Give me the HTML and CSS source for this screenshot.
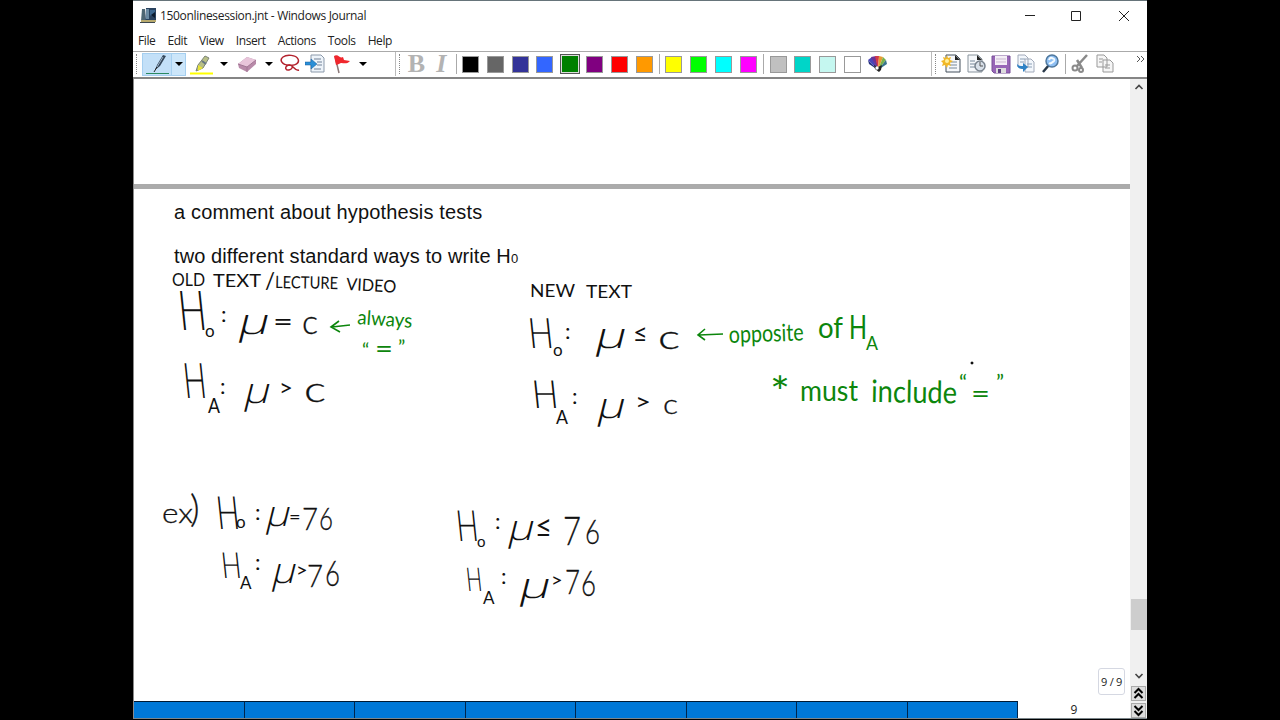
FILE: index.html
```html
<!DOCTYPE html>
<html lang="en">
<head>
  <meta charset="utf-8">
  <title>150onlinesession.jnt - Windows Journal</title>
  <link rel="stylesheet" href="styles.css">
</head>
<body>

<div class="window">
  <div class="titlebar">
    <svg class="app-icon" width="18" height="17" viewBox="0 0 18 17">
      <path d="M6 0h10v13H5z" fill="#29425f"/><path d="M6 1h3v10H6z" fill="#6b8aa2"/><path d="M10 2h5v3l-4 3-1-1z" fill="#3c678f"/>
      <path d="M2 1h3v12H1z" fill="#4e6673"/><path d="M1 12h15v2H1z" fill="#b7a96d"/><path d="M0 14h15v1H0z" fill="#3b4750"/><path d="M11 7l4-3v6z" fill="#0b1b2d"/>
    </svg>
    <span class="title">150onlinesession.jnt - Windows Journal</span>
    <div class="controls">
      <svg width="110" height="14" viewBox="0 0 110 14" fill="none" stroke="#222">
        <path d="M1 6.500h10M47.500 2.500h9v9h-9zM95 2l10 10M105 2l-10 10"/>
      </svg>
    </div>
  </div>

  <div class="menubar">
    <span>File</span><span>Edit</span><span>View</span><span>Insert</span><span>Actions</span><span>Tools</span><span>Help</span>
  </div>

  <div class="toolbars">
    <div class="toolbar tools">
      <i class="grip"></i>
      <div class="pen">
        <svg width="28" height="22" viewBox="0 0 28 22"><path d="M3 20.500h23" stroke="#2a8a62"/><path d="M12 17l2-5L20 2l3 1-6 10z" fill="#34465a"/><path d="M20 4l-6 10" stroke="#9db3c8"/><path d="M11 19l3-5" stroke="#222"/></svg>
        <i class="arrow"></i>
      </div>
      <div class="slot marker">
        <svg width="24" height="22" viewBox="0 0 24 22"><path d="M0 20.500h23" stroke="#ff0" stroke-width="2"/><path d="M6 18l2-6 7-9 4 2-6 10z" fill="#b8bf86" stroke="#7b8476"/><path d="M8 12l5 3-5 3z" fill="#e8e337"/><path d="M12 8l4 3" stroke="#667784" stroke-width="2"/></svg>
      </div>
      <div class="drop"><i class="arrow"></i></div>
      <div class="slot eraser">
        <svg width="20" height="18" viewBox="0 0 20 18"><path d="M1 9L10 2l9 3v4l-9 8-8-4z" fill="#b88aa9"/><path d="M1 9L10 2l9 3-9 7z" fill="#e8c5da"/><path d="M10 12v5M1 9l9 3 9-7" fill="none" stroke="#a27795"/></svg>
      </div>
      <div class="drop"><i class="arrow"></i></div>
      <div class="slot">
        <svg width="20" height="20" viewBox="0 0 20 20" fill="none" stroke="#b3222d" stroke-width="1.500"><path d="M9 11C2 11-1 6 3 3s13-2 15 2-3 7-8 6c-3 0-5 2-4 4s5 1 6-1-1-3-3-3M12 12c2 2 4 5 7 4"/></svg>
      </div>
      <div class="slot">
        <svg width="20" height="20" viewBox="0 0 20 20"><path d="M6 1h10l3 3v14H6z" fill="#eef4fa" stroke="#8b99aa"/><path d="M9 5h7M12 8h5M12 11h5M9 15h7" stroke="#718096"/><path d="M0 8h6V5l6 5-6 5v-4H0z" fill="#2b8fd6" stroke="#175b98" stroke-width=".5"/></svg>
      </div>
      <div class="slot flag">
        <svg width="18" height="20" viewBox="0 0 18 20"><path d="M2 2l4 17" stroke="#8b7878" stroke-width="1.500"/><path d="M1 2c4-3 6 3 9 1l1 3 6 1c-5 5-8 0-11 3L3 11z" fill="#f0272d"/></svg>
      </div>
      <div class="drop"><i class="arrow"></i></div>
    </div>

    <div class="toolbar format">
      <i class="grip"></i>
      <div class="slot letter">B</div>
      <div class="slot letter italic">I</div>
      <i class="sep"></i>
      <div class="slot"><i class="swatch black"></i></div>
      <div class="slot"><i class="swatch gray"></i></div>
      <div class="slot"><i class="swatch navy"></i></div>
      <div class="slot"><i class="swatch blue"></i></div>
      <div class="slot"><i class="swatch green selected"></i></div>
      <div class="slot"><i class="swatch purple"></i></div>
      <div class="slot"><i class="swatch red"></i></div>
      <div class="slot"><i class="swatch orange"></i></div>
      <i class="sep"></i>
      <div class="slot"><i class="swatch yellow"></i></div>
      <div class="slot"><i class="swatch lime"></i></div>
      <div class="slot"><i class="swatch cyan"></i></div>
      <div class="slot"><i class="swatch magenta"></i></div>
      <i class="sep"></i>
      <div class="slot"><i class="swatch silver"></i></div>
      <div class="slot"><i class="swatch teal"></i></div>
      <div class="slot"><i class="swatch mint"></i></div>
      <div class="slot"><i class="swatch white"></i></div>
      <div class="slot">
        <svg width="20" height="18" viewBox="0 0 20 18"><path d="M10 15L1 9 0 5z" fill="#26327e"/><path d="M10 15L0 5l4-3z" fill="#4a45b8"/><path d="M10 15L3 2l5-1z" fill="#6d3295"/><path d="M10 15L7 1h4z" fill="#d33b48"/><path d="M10 15l1-14 4 1z" fill="#e89b32"/><path d="M10 15l5-13 3 3z" fill="#79b14b"/><path d="M10 15l8-10 1 4z" fill="#38738c"/><path d="M6 10l4 2 4-2-1 5-2 2-4-3z" fill="#222"/><circle cx="9" cy="13" r="1.700" fill="#fff"/></svg>
      </div>
    </div>

    <div class="toolbar standard">
      <i class="grip"></i>
      <div class="slot">
        <svg width="20" height="20" viewBox="0 0 20 20"><path d="M5 1h10l4 4v13H5z" fill="#f6f8fb" stroke="#44505d"/><path d="M14 1l5 5h-5z" fill="#222"/><path d="M10 8h6M9 11h7M8 14h8" fill="none" stroke="#77889a"/><path d="M6 1l1 3 3-1-1 3 3 1-3 2 1 3-3-1-1 3-2-3-3 1 1-3-2-2 3-1-1-3 3 1z" fill="#f1b827"/><circle cx="6" cy="7" r="2" fill="#fff09c"/></svg>
      </div>
      <div class="slot">
        <svg width="20" height="20" viewBox="0 0 20 20"><path d="M2 1h10l4 4v13H2z" fill="#f6f8fb" stroke="#88939c"/><path d="M11 1l5 5h-5z" fill="#222"/><path d="M4 7h5M4 10h5M4 13h5" stroke="#77889a"/><circle cx="14" cy="12" r="5" fill="#d8e0e9" stroke="#79838e" stroke-width="1.500"/><path d="M14 8v4h3" fill="none" stroke="#555"/></svg>
      </div>
      <div class="slot">
        <svg width="20" height="19" viewBox="0 0 20 19"><path d="M1 1h18v17H3l-2-2z" fill="#9866b7" stroke="#795198"/><path d="M4 1h12v9H4z" fill="#f4eef6"/><path d="M5 4h10M5 7h10" stroke="#c9b7d0"/><path d="M5 13h10v5H5z" fill="#ddd"/><path d="M7 14h3v4H7z" fill="#5c3f80"/></svg>
      </div>
      <div class="slot">
        <svg width="20" height="20" viewBox="0 0 20 20"><path d="M2 1h7l3 3v9H2zM9 5h6l3 3v10H9z" fill="#f3f7fc" stroke="#a2aaba"/><path d="M4 5h5M4 8h4M11 10h5M11 13h5" stroke="#8da0b6"/><path d="M1 10c0 4 3 5 6 5v3l5-5-5-4v3c-3 0-4 0-6-2z" fill="#2f82c5"/></svg>
      </div>
      <div class="slot">
        <svg width="20" height="20" viewBox="0 0 20 20"><path d="M8 11l-6 7" stroke="#293949" stroke-width="2.500"/><circle cx="11" cy="7" r="6" fill="#8fc0f4" stroke="#50789d" stroke-width="1.500"/><path d="M8 6c2-5 4 0 6-1M8 9c3 2 4-3 6-2" stroke="#f5fbff" fill="none" stroke-width="2"/></svg>
      </div>
      <i class="sep"></i>
      <div class="slot">
        <svg width="18" height="20" viewBox="0 0 18 20" fill="none" stroke="#8a8a8a" stroke-width="2"><path d="M16 1L6 12M6 6l5 8" stroke-width="2.500"/><circle cx="4" cy="14" r="2.500"/><circle cx="10" cy="16" r="2"/></svg>
      </div>
      <div class="slot">
        <svg width="20" height="20" viewBox="0 0 20 20" fill="#f6f6f6" stroke="#999"><path d="M2 1h7l3 3v9H2zM8 6h7l3 3v9H8z"/><path d="M4 5h4M4 8h3M10 11h5M10 14h5"/></svg>
      </div>
      <svg class="more" width="10" height="8" viewBox="0 0 10 8" fill="none" stroke="#555"><path d="M1 1l3 3-3 3M5 1l3 3-3 3"/></svg>
    </div>
  </div>

  <div class="workspace">
    <div class="document">
      <div class="sheet">
        <div class="previous-page"></div>
        <p class="typed">a comment about hypothesis tests</p>
        <p class="typed second">two different standard ways to write H<small>0</small></p>

        <!-- handwritten notes, in window coordinates -->
        <svg class="ink" width="996" height="622" viewBox="134 79 996 622">
          <g class="caps">
            <text x="172" y="286" textLength="33" lengthAdjust="spacingAndGlyphs">OLD</text>
            <text x="213" y="287" textLength="48" lengthAdjust="spacingAndGlyphs">TEXT</text>
            <text x="265" y="289" textLength="10" lengthAdjust="spacingAndGlyphs" font-size="23">/</text>
            <text x="275" y="288" textLength="63" lengthAdjust="spacingAndGlyphs" transform="rotate(1 275 288)">LECTURE</text>
            <text x="346" y="290" textLength="50" lengthAdjust="spacingAndGlyphs" transform="rotate(3 346 290)">VIDEO</text>
            <text x="530" y="297" textLength="45" lengthAdjust="spacingAndGlyphs">NEW</text>
            <text x="586" y="298" textLength="46" lengthAdjust="spacingAndGlyphs">TEXT</text>
          </g>

          <g class="tall">
            <text x="178" y="330" font-size="55" textLength="28" lengthAdjust="spacingAndGlyphs">H</text>
            <text x="183" y="398" font-size="49" textLength="23" lengthAdjust="spacingAndGlyphs">H</text>
            <text x="528" y="348" font-size="42" textLength="25" lengthAdjust="spacingAndGlyphs">H</text>
            <text x="532" y="408" font-size="39" textLength="26" lengthAdjust="spacingAndGlyphs">H</text>
            <text x="216" y="529" font-size="46" textLength="23" lengthAdjust="spacingAndGlyphs">H</text>
            <text x="221" y="578" font-size="36" textLength="20" lengthAdjust="spacingAndGlyphs">H</text>
            <text x="456" y="541" font-size="43" textLength="22" lengthAdjust="spacingAndGlyphs">H</text>
            <text x="466" y="591" font-size="33" textLength="16" lengthAdjust="spacingAndGlyphs">H</text>
          </g>

          <g class="sub">
            <text x="205" y="337">o</text><text x="208" y="413" font-size="22" textLength="12" lengthAdjust="spacingAndGlyphs">A</text>
            <text x="553" y="356">o</text><text x="556" y="424" font-size="20" textLength="12" lengthAdjust="spacingAndGlyphs">A</text>
            <text x="236" y="528">o</text><text x="240" y="589">A</text>
            <text x="477" y="547" font-size="15">o</text><text x="483" y="604">A</text>
          </g>

          <g class="sign">
            <text class="colon" x="221" y="322">:</text><text class="colon" x="220" y="394">:</text>
            <text class="colon" x="565" y="339">:</text><text class="colon" x="572" y="404">:</text>
            <text class="colon" x="255" y="520">:</text><text class="colon" x="255" y="570">:</text>
            <text class="colon" x="495" y="529">:</text><text class="colon" x="501" y="584">:</text>
            <text x="273" y="331" font-size="27" textLength="20" lengthAdjust="spacingAndGlyphs">=</text>
            <text x="279" y="396">&gt;</text>
            <text x="633" y="342" font-size="25">≤</text>
            <text x="635" y="410" textLength="16" lengthAdjust="spacingAndGlyphs">&gt;</text>
            <text x="289" y="524" font-size="20">=</text><text x="296" y="577" font-size="20">&gt;</text>
            <text x="535" y="537" font-size="31" textLength="17" lengthAdjust="spacingAndGlyphs">≤</text><text x="551" y="587" font-size="20">&gt;</text>
          </g>

          <g class="mu">
            <text x="240" y="334" textLength="31" lengthAdjust="spacingAndGlyphs">μ</text>
            <text x="246" y="403" textLength="26" lengthAdjust="spacingAndGlyphs">μ</text>
            <text x="597" y="348" textLength="31" lengthAdjust="spacingAndGlyphs">μ</text>
            <text x="599" y="418" textLength="28" lengthAdjust="spacingAndGlyphs">μ</text>
            <text x="268" y="526" textLength="24" lengthAdjust="spacingAndGlyphs">μ</text>
            <text x="274" y="583" textLength="24" lengthAdjust="spacingAndGlyphs">μ</text>
            <text x="510" y="540" textLength="26" lengthAdjust="spacingAndGlyphs">μ</text>
            <text x="521" y="598" textLength="31" lengthAdjust="spacingAndGlyphs">μ</text>
          </g>

          <g class="letters">
            <text x="302" y="334" font-size="34">c</text>
            <text x="304" y="402" font-size="35" textLength="22" lengthAdjust="spacingAndGlyphs">c</text>
            <text x="658" y="349" font-size="34" textLength="22" lengthAdjust="spacingAndGlyphs">c</text>
            <text x="663" y="414" font-size="28" textLength="15" lengthAdjust="spacingAndGlyphs">c</text>
            <text x="162" y="523" font-size="27" textLength="31" lengthAdjust="spacingAndGlyphs">ex</text>
            <text x="190" y="522" font-size="37">)</text>
            <text x="302" y="530" font-size="32" textLength="16" lengthAdjust="spacingAndGlyphs">7</text><text x="319" y="530" font-size="31" textLength="14" lengthAdjust="spacingAndGlyphs">6</text>
            <text x="307" y="587" font-size="32" textLength="16" lengthAdjust="spacingAndGlyphs">7</text><text x="325" y="586" font-size="35" textLength="15" lengthAdjust="spacingAndGlyphs">6</text>
            <text x="563" y="545" font-size="39" textLength="18" lengthAdjust="spacingAndGlyphs">7</text><text x="585" y="544" font-size="33" textLength="15" lengthAdjust="spacingAndGlyphs">6</text>
            <text x="565" y="594" font-size="34" textLength="15" lengthAdjust="spacingAndGlyphs">7</text><text x="581" y="596" font-size="36" textLength="15" lengthAdjust="spacingAndGlyphs">6</text>
            <circle cx="972" cy="363" r="1.300"/>
          </g>

          <g class="green-ink">
            <path d="M350 325l-18 2m7-6l-8 6 9 5M723 334l-24 1m6-6l-7 6 7 5"/>
            <text x="357" y="324" font-size="20" textLength="55" lengthAdjust="spacingAndGlyphs" transform="rotate(4 357 324)">always</text>
            <text x="362" y="357" font-size="20">“</text>
            <text x="375" y="358" font-size="25" textLength="18" lengthAdjust="spacingAndGlyphs">=</text>
            <text x="398" y="354" font-size="20">”</text>
            <text x="729" y="343" font-size="24" textLength="75" lengthAdjust="spacingAndGlyphs" transform="rotate(-2 729 343)">opposite</text>
            <text x="818" y="338" font-size="28" textLength="25" lengthAdjust="spacingAndGlyphs">of</text>
            <text x="849" y="339" font-size="33" textLength="18" lengthAdjust="spacingAndGlyphs">H</text>
            <text x="866" y="350" font-size="20" textLength="12" lengthAdjust="spacingAndGlyphs">A</text>
            <text x="770" y="407" font-size="42" textLength="20" lengthAdjust="spacingAndGlyphs">*</text>
            <text x="800" y="401" font-size="29" textLength="58" lengthAdjust="spacingAndGlyphs">must</text>
            <text x="871" y="402" font-size="31" textLength="86" lengthAdjust="spacingAndGlyphs" transform="rotate(1 871 402)">include</text>
            <text x="959" y="390" font-size="22">“</text>
            <text x="971" y="403" font-size="27" textLength="19" lengthAdjust="spacingAndGlyphs">=</text>
            <text x="996" y="390" font-size="22">”</text>
          </g>
        </svg>
        <div class="page-badge">9 / 9</div>
      </div>

      <div class="page-strip">
        <i></i><i></i><i></i><i></i><i></i><i></i><i></i><i></i>
        <span>9</span>
      </div>
    </div>

    <div class="scrollbar">
      <svg class="up" width="16" height="16" viewBox="0 0 16 16"><path d="M4.500 10L8 6.500l3.500 3.500"/></svg>
      <div class="track"><div class="thumb"></div></div>
      <svg class="down" width="16" height="16" viewBox="0 0 16 16"><path d="M4.500 6L8 9.500 11.500 6"/></svg>
      <svg class="jump" width="15" height="15" viewBox="0 0 15 15"><path d="M3.500 7l4-4 4 4M3.500 12l4-4 4 4"/></svg>
      <svg class="jump" width="15" height="15" viewBox="0 0 15 15"><path d="M3.500 3l4 4 4-4M3.500 8l4 4 4-4"/></svg>
    </div>
  </div>
</div>

</body>
</html>
```
FILE: styles.css
```css
* {
  box-sizing: border-box;
  margin: 0;
  padding: 0;
}
body {
  height: 720px;
  overflow: hidden;
  background: #000;
  font-family: "Open Sans", "Noto Sans", sans-serif;
  color: #222;
}
svg {
  display: block;
  flex: none;
}
.window {
  display: flex;
  flex-direction: column;
  width: 1014px;
  height: 719px;
  margin-left: 133px;
  background: #fff;
  border-top: 1px solid #66747a;
  border-bottom: 1px solid #7b858a;
}
.titlebar {
  display: flex;
  align-items: center;
  height: 30px;
  padding-left: 7px;
}
.title {
  margin-left: 2px;
  font-size: 12px;
  line-height: 16px;
  letter-spacing: -0.33px;
  white-space: nowrap;
}
.controls {
  margin: 0 13px 0 auto;
}
.menubar {
  display: flex;
  height: 20px;
  padding-left: 5px;
  font-size: 12px;
  line-height: 20px;
  letter-spacing: -0.4px;
}
.menubar span {
  margin-right: 12px;
}

.toolbars {
  display: flex;
  height: 28px;
  border-top: 1px solid #aaa;
  border-bottom: 2px solid #858585;
}
.toolbar {
  display: flex;
  align-items: center;
  height: 24px;
  flex: none;
}
.tools {
  width: 263px;
  border-right: 1px solid #bbb;
}
.format {
  width: 536px;
  border-right: 1px solid #bbb;
}
.standard {
  width: 215px;
}
.grip {
  width: 1px;
  height: 20px;
  margin: 0 4px 0 3px;
  border-left: 1px dotted #888;
}
.standard .grip {
  margin-right: 3px;
}
.slot {
  display: flex;
  align-items: center;
  justify-content: center;
  width: 24.8px;
  height: 22px;
  flex: none;
}
.pen {
  display: flex;
  align-items: center;
  width: 44px;
  height: 23px;
  margin-left: 1px;
  background: linear-gradient(to right, #c3e0f8 28px, #a5cff0 28px, #a5cff0 29px, #cce6fa 29px);
  border: 1px solid #a5cff0;
}
.pen .arrow {
  margin-left: 4px;
}
.marker {
  margin-left: 4px;
}
.drop {
  display: flex;
  justify-content: center;
  width: 18px;
}
.eraser {
  margin-left: 2px;
}
.flag {
  margin-left: 2px;
}
.arrow {
  border: 4px solid transparent;
  border-top-color: #000;
  border-bottom: 0;
}
.letter {
  font: bold 26px "Liberation Serif", serif;
  color: #b3b3b3;
}
.italic {
  font-style: italic;
}
.sep {
  width: 1px;
  height: 20px;
  margin: 0 2px;
  background: #aaa;
}
.swatch {
  width: 17px;
  height: 17px;
  margin-right: 1px;
  border: 1px solid #999;
}
.selected {
  width: 20px;
  height: 20px;
  border-color: #555;
  box-shadow: inset 0 0 0 1px #ddd;
}
.black { background: #000; }
.gray { background: #666; }
.navy { background: #333399; }
.blue { background: #3366ff; }
.green { background: #008000; }
.purple { background: #800080; }
.red { background: #f00; }
.orange { background: #ff9900; }
.yellow { background: #ff0; }
.lime { background: #0f0; }
.cyan { background: #0ff; }
.magenta { background: #f0f; }
.silver { background: #c0c0c0; }
.teal { background: #00d5c8; }
.mint { background: #c5f7f0; }
.white { background: #fff; }
.more {
  align-self: flex-start;
  margin: 3px 1px 0 auto;
}

.workspace {
  display: flex;
  flex: 1;
  min-height: 0;
  border-left: 1px solid #8a8a8a;
}
.document {
  display: flex;
  flex-direction: column;
  width: 996px;
}
.sheet {
  position: relative;
  flex: 1;
}
.previous-page {
  height: 110px;
  border-bottom: 5px solid #ababab;
}
.typed {
  height: 24px;
  margin: 11px 0 0 40px;
  font: 20px/24px "Liberation Sans", sans-serif;
  letter-spacing: 0.15px;
  color: #111;
}
.second {
  margin-top: 20px;
  letter-spacing: 0.1px;
}
.typed small {
  font-size: 13px;
}

.ink {
  position: absolute;
  left: 0;
  top: 0;
  font-family: Lato, sans-serif;
  font-weight: 400;
  fill: #111;
}
.caps {
  font-size: 17px;
}
.tall {
  font-weight: 300;
}
.tall text {
  transform-box: fill-box;
  transform-origin: center;
  transform: skewX(6deg);
}
.sub {
  font-size: 17px;
}
.sign {
  font-size: 24px;
}
.colon {
  font-size: 22px;
}
.mu {
  font-family: "Open Sans", sans-serif;
  font-size: 36px;
  font-weight: 300;
}
.mu text {
  transform-box: fill-box;
  transform-origin: center;
  transform: skewX(-14deg);
}
.letters {
  font-weight: 300;
  stroke: #111;
  stroke-width: 0.3;
}
.green-ink {
  fill: #0c860c;
}
.green-ink path {
  fill: none;
  stroke: #0c860c;
  stroke-width: 1.6;
}

.page-badge {
  position: absolute;
  right: 5px;
  bottom: 6px;
  width: 27px;
  height: 27px;
  border: 1px solid #d5d8e2;
  border-radius: 3px;
  background: #fff;
  font-size: 11px;
  line-height: 25px;
  letter-spacing: -0.3px;
  text-align: center;
  white-space: nowrap;
}
.page-strip {
  display: flex;
  height: 17px;
  font-size: 12px;
  line-height: 17px;
}
.page-strip i {
  width: 110.5px;
  background: #0078d7;
  border-top: 1px solid #001a33;
  border-right: 1px solid #00264d;
}
.page-strip span {
  flex: 1;
  text-align: center;
}
.scrollbar {
  display: flex;
  flex-direction: column;
  width: 17px;
  align-items: center;
  background: #f0f0f0;
}
.scrollbar path {
  fill: none;
  stroke: #444;
  stroke-width: 1.6;
}
.track {
  display: flex;
  flex-direction: column;
  justify-content: flex-end;
  flex: 1;
  width: 16px;
}
.thumb {
  height: 31px;
  margin-bottom: 38px;
  background: #cdcdcd;
}
.jump {
  margin-top: 2px;
  background: #ddd;
  outline: 1px solid #aaa;
  outline-offset: -1px;
}
.scrollbar .jump path {
  stroke: #000;
  stroke-width: 2;
}
```
